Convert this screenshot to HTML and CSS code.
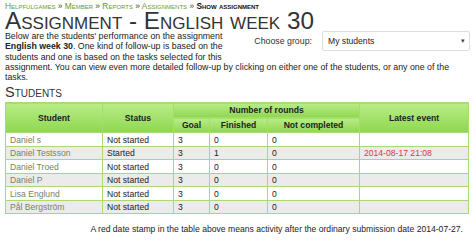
FILE: index.html
```html
<!DOCTYPE html>
<html lang="en">
<head>
    <meta charset="UTF-8">
    <title>Show Assignment</title>
    <link rel="stylesheet" href="styles.css">
</head>
<body>

    <div class="breadcrumb">
        <a href="#">Helpfulgames</a> &raquo; <a href="#">Member</a> &raquo; <a href="#">Reports</a> &raquo; <a href="#">Assignments</a> &raquo; <span class="current">Show assignment</span>
    </div>

    <h1>Assignment - English week 30</h1>

    <div class="group-picker">
        <label for="group">Choose group:</label>
        <div class="select">My students<span class="caret">&#9662;</span></div>
    </div>

    <p class="intro">Below are the students' performance on the assignment <b>English week 30</b>. One kind of follow-up is based on the students and one is based on the tasks selected for this assignment. You can view even more detailed follow-up by clicking on either one of the students, or any one of the tasks.</p>

    <h2>Students</h2>

    <table class="results">
        <thead>
            <tr>
                <th rowspan="2" class="col-student">Student</th>
                <th rowspan="2" class="col-status">Status</th>
                <th colspan="3">Number of rounds</th>
                <th rowspan="2">Latest event</th>
            </tr>
            <tr>
                <th class="col-goal">Goal</th>
                <th class="col-finished">Finished</th>
                <th class="col-notcompleted">Not completed</th>
            </tr>
        </thead>
        <tbody>
            <tr><td><a href="#">Daniel s</a></td><td>Not started</td><td>3</td><td>0</td><td>0</td><td></td></tr>
            <tr><td><a href="#">Daniel Testsson</a></td><td>Started</td><td>3</td><td>1</td><td>0</td><td class="late">2014-08-17 21:08</td></tr>
            <tr><td><a href="#">Daniel Troed</a></td><td>Not started</td><td>3</td><td>0</td><td>0</td><td></td></tr>
            <tr><td><a href="#">Daniel P</a></td><td>Not started</td><td>3</td><td>0</td><td>0</td><td></td></tr>
            <tr><td><a href="#">Lisa Englund</a></td><td>Not started</td><td>3</td><td>0</td><td>0</td><td></td></tr>
            <tr><td><a href="#">Pål Bergström</a></td><td>Not started</td><td>3</td><td>0</td><td>0</td><td></td></tr>
        </tbody>
    </table>

    <p class="note">A red date stamp in the table above means activity after the ordinary submission date 2014-07-27.</p>

</body>
</html>
```

FILE: styles.css
```css
body {
    font-family: "Liberation Sans", Arial, sans-serif;
    font-size: 8.8px;
    color: #222;
    margin: 0;
    padding: 2px 5px 0 5px;
    background-color: #fff;
}
a {
    text-decoration: none;
}
.breadcrumb {
    font-size: 8.4px;
    font-variant: small-caps;
    color: #444;
    line-height: 9px;
}
.breadcrumb a {
    color: #6b9a2c;
}
.breadcrumb .current {
    font-weight: bold;
    color: #111;
}
h1 {
    font-size: 24.3px;
    font-weight: normal;
    font-variant: small-caps;
    color: #333;
    margin: 0;
    line-height: 20px;
}
h2 {
    font-size: 14.5px;
    font-weight: normal;
    font-variant: small-caps;
    color: #333;
    margin: 2px 0 2px 0;
    line-height: 16px;
}
.group-picker {
    float: right;
    display: flex;
    align-items: center;
    gap: 10px;
    margin-right: -1px;
    margin-bottom: 4px;
}
.group-picker label {
    color: #333;
}
.select {
    width: 137px;
    height: 18px;
    line-height: 18px;
    padding: 0 4px 0 5px;
    border: 1px solid #ddd;
    border-radius: 2px;
    font-size: 8.6px;
    display: flex;
    justify-content: space-between;
}
.caret {
    font-size: 7px;
    color: #444;
}
.intro {
    margin: 0;
    line-height: 10.3px;
}
.results {
    width: 100%;
    border-collapse: collapse;
    font-size: 8.6px;
    border: 1px solid #9fd36b;
}
.results th {
    background: linear-gradient(#b9ed88, #8ed74f);
    border: 1px solid #a6db70;
    font-weight: bold;
    color: #222;
    height: 14px;
    padding: 0 4px;
}
.results td {
    border: 1px solid #a6db70;
    height: 12.5px;
    padding: 0 4px;
    line-height: 12px;
}
.results tbody tr:nth-child(even) td {
    background-color: #ebebeb;
}
.results td a {
    color: #7b8356;
}
.results .late {
    color: #e0353a;
}
.col-student { width: 88px; }
.col-status { width: 62px; }
.col-goal { width: 27px; }
.col-finished { width: 49px; }
.col-notcompleted { width: 83px; }
.note {
    font-size: 8.6px;
    line-height: 10px;
    text-align: right;
    margin: 10px 6px 0 0;
}
```
